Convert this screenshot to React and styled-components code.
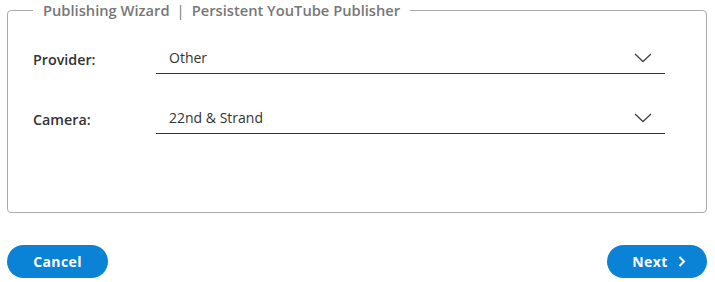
import React from "react";
import styled, { createGlobalStyle } from "styled-components";

const Global = createGlobalStyle`
  html, body { margin: 0; padding: 0; background: #fff; }
  body { font-family: "Open Sans", "Lato", sans-serif; color: #333; }
  * { box-sizing: border-box; }
`;

const Page = styled.div`
  padding: 0 8px 0 7px;
`;

const Panel = styled.fieldset`
  margin: 0;
  border: 1px solid #aaa;
  border-radius: 4px;
  padding: 22px 41px 78px 25px;
  min-width: 0;
`;

const Legend = styled.legend`
  padding: 0 10px;
  font-size: 14.7px;
  line-height: 20px;
  font-weight: 600;
  color: #777;
`;

const Sep = styled.span`
  margin: 0 7px;
  font-weight: 400;
`;

const Rows = styled.div`
  display: flex;
  flex-direction: column;
  gap: 28px;
`;

const Row = styled.div`
  display: grid;
  grid-template-columns: 123px 1fr;
  align-items: center;
`;

const Label = styled.label`
  font-size: 14.3px;
  font-weight: 600;
  color: #333;
  padding-top: 3px;
`;

const Select = styled.div`
  height: 32px;
  border-bottom: 1px solid #333;
  display: flex;
  align-items: center;
  justify-content: space-between;
  padding: 0 13px 0 13px;
  font-size: 14px;
  color: #333;
`;

const Chevron = () => (
  <svg width="18" height="10" viewBox="0 0 18 10" fill="none">
    <path d="M1 1 L9 8.5 L17 1" stroke="#444" strokeWidth="1.3" />
  </svg>
);

const Footer = styled.div`
  display: flex;
  justify-content: space-between;
  margin-top: 32px;
`;

const Button = styled.button`
  height: 33px;
  width: ${(p) => p.$w}px;
  border: none;
  border-radius: 17px;
  background: #0a82d6;
  color: #fff;
  font-family: "Open Sans", sans-serif;
  font-weight: 700;
  font-size: 14px;
  letter-spacing: 0.4px;
  display: flex;
  align-items: center;
  justify-content: center;
  gap: 10px;
  padding: 0 0 0 ${(p) => p.$pl || 0}px;
  cursor: pointer;
`;

export default function App() {
  return (
    <Page>
      <Global />
      <Panel>
        <Legend>
          Publishing Wizard<Sep>|</Sep>Persistent YouTube Publisher
        </Legend>
        <Rows>
          <Row>
            <Label>Provider:</Label>
            <Select>
              <span>Other</span>
              <Chevron />
            </Select>
          </Row>
          <Row>
            <Label>Camera:</Label>
            <Select>
              <span>22nd &amp; Strand</span>
              <Chevron />
            </Select>
          </Row>
        </Rows>
      </Panel>
      <Footer>
        <Button $w={101}>Cancel</Button>
        <Button $w={100} $pl={4}>
          Next
          <svg width="8" height="11" viewBox="0 0 8 11" fill="none">
            <path d="M1.5 1 L6 5.5 L1.5 10" stroke="#fff" strokeWidth="2" />
          </svg>
        </Button>
      </Footer>
    </Page>
  );
}
